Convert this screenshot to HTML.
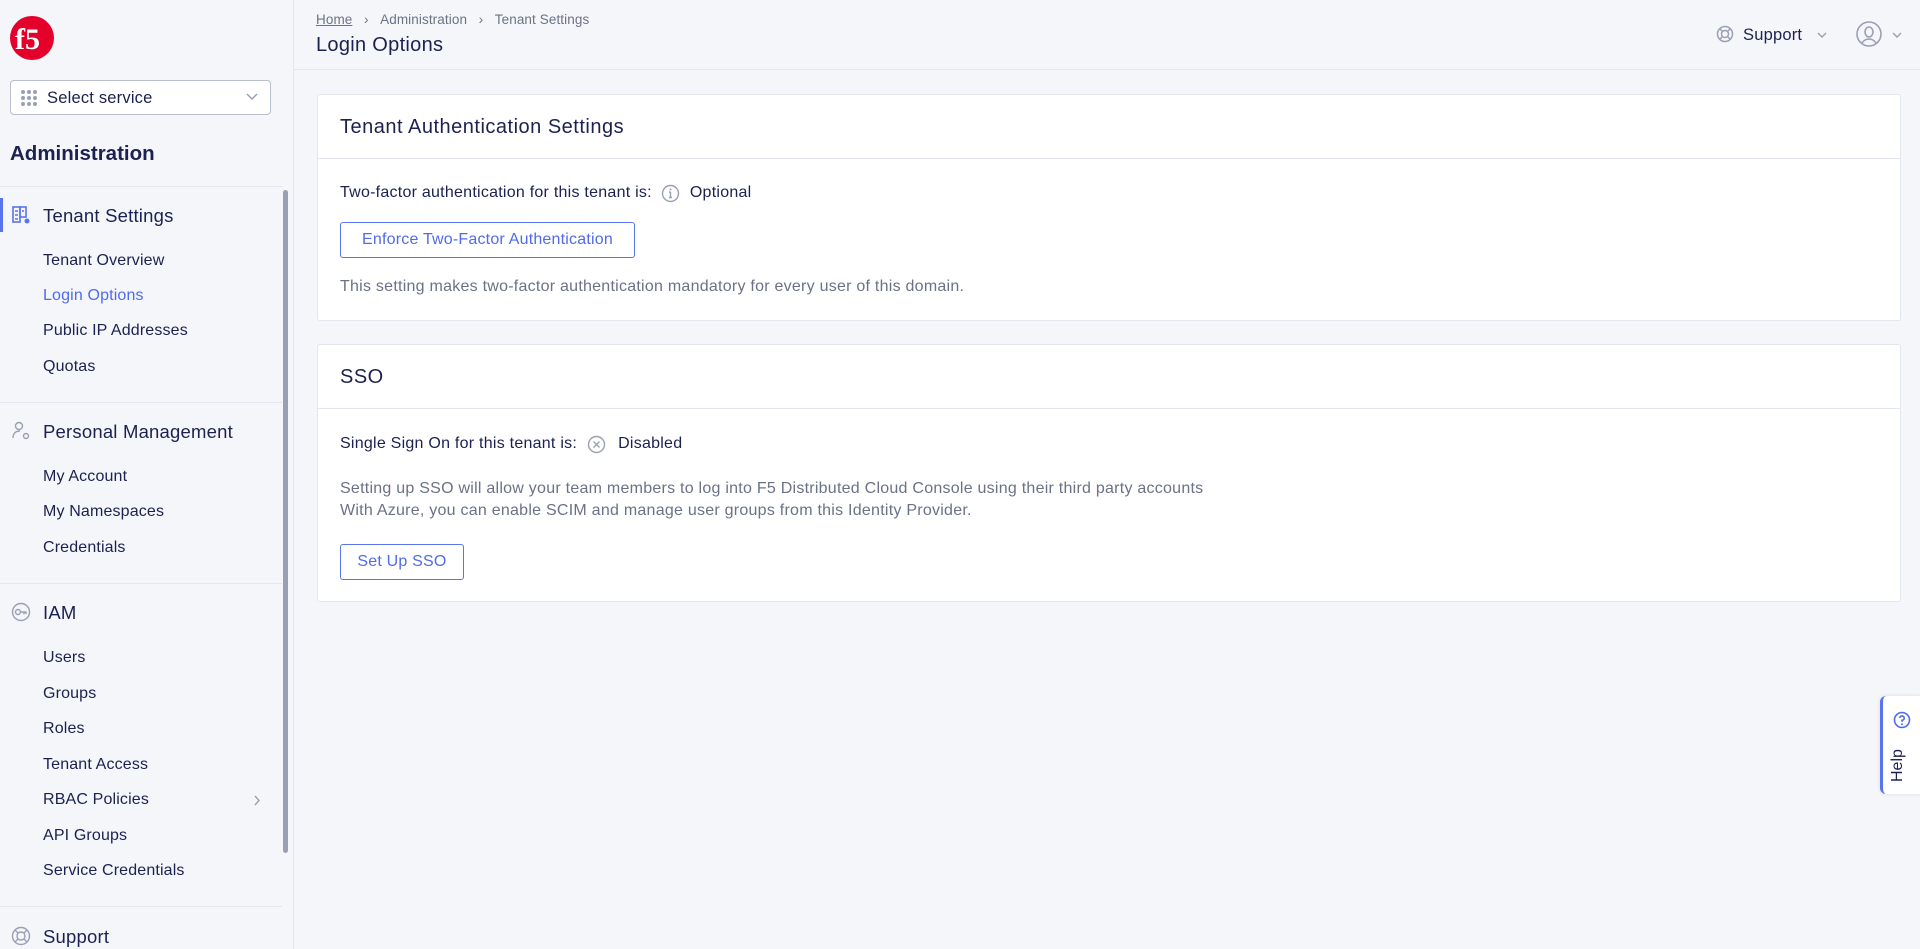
<!DOCTYPE html>
<html><head><meta charset="utf-8"><style>
*{box-sizing:border-box;margin:0;padding:0}
body{width:1920px;height:949px;overflow:hidden;background:#f5f6f9;font-family:"Liberation Sans",sans-serif;color:#1b2150;position:relative}
.a{position:absolute;white-space:nowrap}
#side{position:absolute;left:0;top:0;width:294px;height:949px;background:#f5f6f9;border-right:1px solid #e3e6ee}
.it{position:absolute;left:43px;font-size:16px;letter-spacing:.15px;color:#1b2150;transform:translateY(-50%)}
.hd{position:absolute;left:43px;font-size:18.5px;letter-spacing:.2px;color:#1b2150;transform:translateY(-50%)}
.dv{position:absolute;left:0;width:282px;height:1px;background:#e3e6ee}
.ic{position:absolute;left:11px;transform:translateY(-50%)}
.card{position:absolute;left:317px;width:1584px;background:#fff;border:1px solid #e3e6ee;border-radius:3px}
.btn{position:absolute;border:1px solid #5a73ee;border-radius:3px;color:#4f6bed;font-size:16px;letter-spacing:.2px;display:flex;align-items:center;justify-content:center;background:#fff}
.gray{color:#6b7287}
.t{font-size:16px;letter-spacing:.25px}
.tt{font-size:20px;letter-spacing:.5px}
.row{display:flex;align-items:center}
</style></head><body>
<div id="side">
<svg class="a" style="left:9px;top:15px" width="46" height="46" viewBox="0 0 46 46"><circle cx="23" cy="23" r="22" fill="#e4002b"/><text x="6" y="34" font-family="Liberation Serif,serif" font-weight="bold" font-size="30" fill="#fff">f5</text></svg>
<div class="a" style="left:10px;top:80px;width:261px;height:35px;border:1px solid #b9bfcc;border-radius:4px;background:#fff"></div>
<svg class="a" style="left:20px;top:89px" width="18" height="18"><g fill="#9aa0b3"><circle cx="3" cy="3" r="2"/><circle cx="9" cy="3" r="2"/><circle cx="15" cy="3" r="2"/><circle cx="3" cy="9" r="2"/><circle cx="9" cy="9" r="2"/><circle cx="15" cy="9" r="2"/><circle cx="3" cy="15" r="2"/><circle cx="9" cy="15" r="2"/><circle cx="15" cy="15" r="2"/></g></svg>
<div class="a" style="left:47px;top:89px;font-size:16.5px;letter-spacing:.2px">Select service</div>
<svg class="a" style="left:246px;top:93px" width="12" height="8"><path d="M1 1l5 5 5-5" stroke="#9aa0b3" fill="none" stroke-width="1.5"/></svg>
<div class="a" style="left:10px;top:142px;font-size:20.5px;font-weight:bold">Administration</div>
<div class="dv" style="top:186px"></div>
<div class="a" style="left:0;top:198px;width:3px;height:34px;background:#5a73ee"></div>
<svg class="ic" style="top:215px" width="20" height="20"><g fill="none" stroke="#5a73ee" stroke-width="1.6"><rect x="2" y="2" width="7" height="15"/><rect x="9" y="2" width="6" height="10"/><path d="M4 6h3M4 10h3M4 14h3M11 6h2"/></g><circle cx="16" cy="16" r="2.5" fill="#5a73ee"/></svg>
<div class="hd" style="top:216px">Tenant Settings</div>
<div class="it" style="top:261px">Tenant Overview</div>
<div class="it" style="top:296px;color:#4f6bed">Login Options</div>
<div class="it" style="top:331px">Public IP Addresses</div>
<div class="it" style="top:367px">Quotas</div>
<div class="dv" style="top:402px"></div>
<svg class="ic" style="top:431px" width="20" height="20"><g fill="none" stroke="#9aa0b3" stroke-width="1.4"><circle cx="8" cy="5" r="3.5"/><path d="M2 17c0-5 3-7 7-7"/><circle cx="15" cy="15" r="2.5"/></g></svg>
<div class="hd" style="top:432px">Personal Management</div>
<div class="it" style="top:477px">My Account</div>
<div class="it" style="top:512px">My Namespaces</div>
<div class="it" style="top:548px">Credentials</div>
<div class="dv" style="top:583px"></div>
<svg class="ic" style="top:612px" width="20" height="20"><g fill="none" stroke="#9aa0b3" stroke-width="1.4"><circle cx="10" cy="10" r="8.5"/><circle cx="7" cy="10" r="2.5"/><path d="M9.5 10h6M13 10v2.5M15 10v2"/></g></svg>
<div class="hd" style="top:613px">IAM</div>
<div class="it" style="top:658px">Users</div>
<div class="it" style="top:694px">Groups</div>
<div class="it" style="top:729px">Roles</div>
<div class="it" style="top:765px">Tenant Access</div>
<div class="it" style="top:800px">RBAC Policies</div>
<svg class="a" style="left:253px;top:795px" width="8" height="11"><path d="M2 1l4 4.5-4 4.5" stroke="#9aa0b3" fill="none" stroke-width="1.4"/></svg>
<div class="it" style="top:836px">API Groups</div>
<div class="it" style="top:871px">Service Credentials</div>
<div class="dv" style="top:906px"></div>
<svg class="ic" style="top:936px" width="20" height="20"><g fill="none" stroke="#9aa0b3" stroke-width="1.4"><circle cx="10" cy="10" r="8.5"/><circle cx="10" cy="10" r="4"/><path d="M4 4l3 3M16 4l-3 3M4 16l3-3M16 16l-3-3"/></g></svg>
<div class="hd" style="top:937px">Support</div>
<div class="a" style="left:283px;top:190px;width:5px;height:663px;background:#9aa0b3;border-radius:3px"></div>
</div>
<div class="a" style="left:294px;top:69px;width:1626px;height:1px;background:#e3e6ee"></div>
<div class="a" style="left:316px;top:12px;font-size:13.5px;letter-spacing:.1px;color:#6b7287"><span style="text-decoration:underline">Home</span>&nbsp;&nbsp;&nbsp;›&nbsp;&nbsp;&nbsp;Administration&nbsp;&nbsp;&nbsp;›&nbsp;&nbsp;&nbsp;Tenant Settings</div>
<div class="a" style="left:316px;top:34px;font-size:20px;letter-spacing:.3px">Login Options</div>
<svg class="a" style="left:1716px;top:25px" width="18" height="18"><g fill="none" stroke="#9aa0b3" stroke-width="1.5"><circle cx="9" cy="9" r="7.5"/><circle cx="9" cy="9" r="3.5"/><path d="M3.7 3.7l2.8 2.8M14.3 3.7l-2.8 2.8M3.7 14.3l2.8-2.8M14.3 14.3l-2.8-2.8"/></g></svg>
<div class="a" style="left:1743px;top:26px;font-size:16.5px;letter-spacing:.2px">Support</div>
<svg class="a" style="left:1817px;top:32px" width="10" height="6"><path d="M1 1l4 4 4-4" stroke="#9aa0b3" fill="none" stroke-width="1.4"/></svg>
<svg class="a" style="left:1856px;top:21px" width="26" height="26"><g fill="none" stroke="#9aa0b3" stroke-width="1.6"><circle cx="13" cy="13" r="12"/><ellipse cx="13" cy="11" rx="4" ry="5"/><path d="M6 22c2-3 4-4 7-4s5 1 7 4"/></g></svg>
<svg class="a" style="left:1892px;top:32px" width="10" height="6"><path d="M1 1l4 4 4-4" stroke="#9aa0b3" fill="none" stroke-width="1.4"/></svg>

<div class="card" style="top:94px;height:227px">
<div class="a tt" style="left:22px;top:21px">Tenant Authentication Settings</div>
<div class="a" style="left:0;top:63px;width:100%;height:1px;background:#e3e6ee"></div>
<div class="a row t" style="left:22px;top:87px;height:22px">Two-factor authentication for this tenant is:
<svg style="margin:0 10px 0 9px" width="19" height="19"><circle cx="9.5" cy="9.5" r="8" fill="none" stroke="#9aa0b3" stroke-width="1.4"/><path d="M9.5 8v5.5M8 13.5h3M8 8h1.5" stroke="#9aa0b3" stroke-width="1.4"/><circle cx="9.5" cy="5.5" r="1" fill="#9aa0b3"/></svg>Optional</div>
<div class="btn" style="left:22px;top:127px;width:295px;height:36px">Enforce Two-Factor Authentication</div>
<div class="a gray t" style="left:22px;top:183px">This setting makes two-factor authentication mandatory for every user of this domain.</div>
</div>

<div class="card" style="top:344px;height:258px">
<div class="a tt" style="left:22px;top:21px">SSO</div>
<div class="a" style="left:0;top:63px;width:100%;height:1px;background:#e3e6ee"></div>
<div class="a row t" style="left:22px;top:88px;height:22px">Single Sign On for this tenant is:
<svg style="margin:0 12px 0 10px" width="19" height="19"><circle cx="9.5" cy="9.5" r="8" fill="none" stroke="#9aa0b3" stroke-width="1.4"/><path d="M6.5 6.5l6 6M12.5 6.5l-6 6" stroke="#9aa0b3" stroke-width="1.4"/></svg>Disabled</div>
<div class="a gray t" style="left:22px;top:135px">Setting up SSO will allow your team members to log into F5 Distributed Cloud Console using their third party accounts</div>
<div class="a gray t" style="left:22px;top:157px">With Azure, you can enable SCIM and manage user groups from this Identity Provider.</div>
<div class="btn" style="left:22px;top:199px;width:124px;height:36px">Set Up SSO</div>
</div>

<div class="a" style="left:1880px;top:696px;width:42px;height:98px;background:#fff;border-left:3px solid #5a73ee;border-radius:6px 0 0 6px;box-shadow:0 0 4px rgba(0,0,0,.1)"></div>
<svg class="a" style="left:1893px;top:711px" width="18" height="18"><circle cx="9" cy="9" r="7.5" fill="none" stroke="#4f6bed" stroke-width="1.6"/><path d="M6.8 7a2.2 2.2 0 1 1 2.2 2.3v1.5" fill="none" stroke="#4f6bed" stroke-width="1.6"/><circle cx="9" cy="13.3" r="1" fill="#4f6bed"/></svg>
<div class="a" style="left:1889px;top:782px;font-size:16px;transform:rotate(-90deg);transform-origin:0 0;color:#1b2150">Help</div>
</body></html>
